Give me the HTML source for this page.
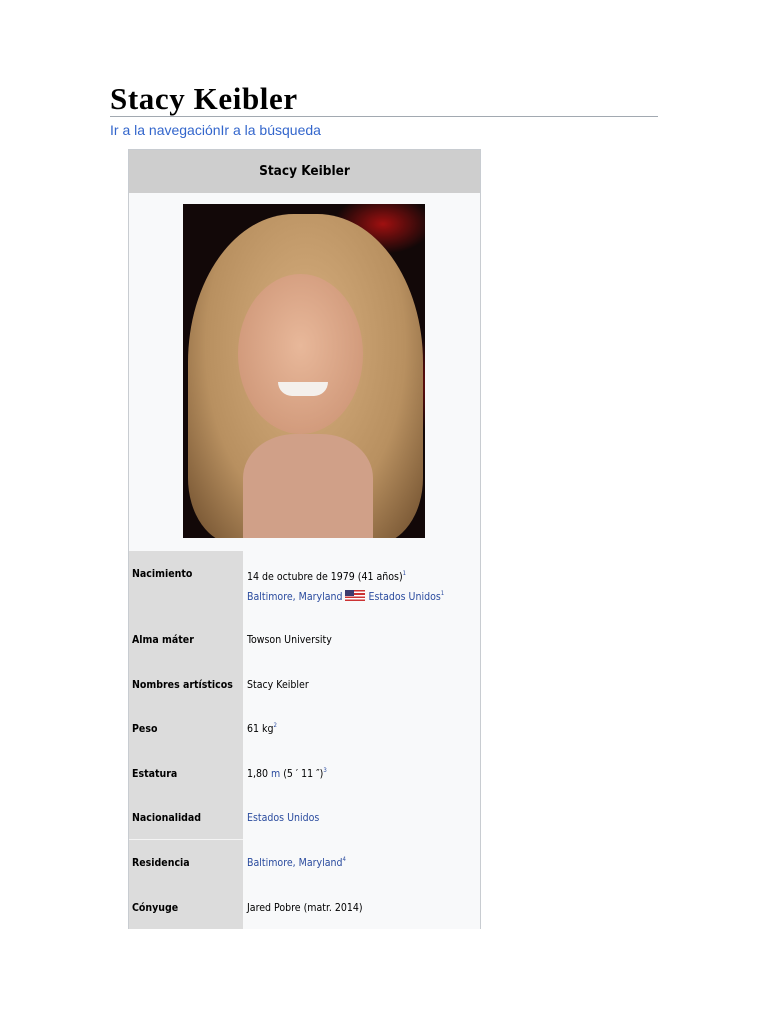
<!DOCTYPE html>
<html><head><meta charset="utf-8"><style>
body{margin:0;background:#fff;width:768px;height:1024px;position:relative;font-family:"Liberation Sans",sans-serif;overflow:hidden}
h1{position:absolute;left:110px;top:81px;margin:0;font:bold 31px "Liberation Serif",serif;letter-spacing:0.6px;color:#000}
.hr{position:absolute;left:110px;top:116px;width:548px;height:1px;background:#a2a9b1}
.nav{position:absolute;left:110px;top:122px;font-size:14px;color:#3366cc}
.box{position:absolute;left:128px;top:149px;width:351px;height:779px;background:#f8f9fa;border:1px solid #c8ccd1;border-bottom:none}
.hd{height:43px;background:#cecece;text-align:center;line-height:43px;font-weight:bold;font-size:13.5px;font-family:"DejaVu Sans Condensed","Liberation Sans",sans-serif}
.photo{position:absolute;left:54px;top:54px;width:242px;height:334px;overflow:hidden;background:#120808}
.row{position:absolute;left:0;width:351px;font-size:10.5px;line-height:14px;font-family:"DejaVu Sans Condensed","Liberation Sans",sans-serif}
.l{position:absolute;left:0;top:0;bottom:0;width:114px;background:#dcdcdc}
.l span{position:absolute;left:3px;font-weight:bold}
.v{position:absolute;left:118px;white-space:nowrap}
.a{color:#2a4b9e}
sup{font-size:6px;color:#2a4b9e;line-height:0;vertical-align:5px}
</style></head><body>
<h1>Stacy Keibler</h1><div class="hr"></div>
<div class="nav">Ir a la navegaciónIr a la búsqueda</div>
<div class="box">
<div class="hd">Stacy Keibler</div>
<div class="photo">
<div style="position:absolute;left:150px;top:-10px;width:100px;height:60px;background:radial-gradient(#a01010,transparent 70%)"></div>
<div style="position:absolute;left:200px;top:130px;width:60px;height:100px;background:radial-gradient(#801010,transparent 70%)"></div>
<div style="position:absolute;left:5px;top:10px;width:235px;height:330px;border-radius:45% 45% 20% 20%;background:radial-gradient(ellipse at 50% 40%,#d8b080,#b89060 60%,#6a4a2a 100%)"></div>
<div style="position:absolute;left:55px;top:70px;width:125px;height:160px;border-radius:50%;background:radial-gradient(ellipse at 50% 45%,#e8b89a,#c98f70)"></div>
<div style="position:absolute;left:60px;top:230px;width:130px;height:110px;background:#d0a088;border-radius:40% 40% 0 0"></div>
<div style="position:absolute;left:95px;top:178px;width:50px;height:14px;border-radius:0 0 25px 25px;background:#f4f0ec"></div>
</div>
<div class="row" style="top:401px;height:66px"><div class="l"><span style="top:16px">Nacimiento</span></div><div class="v" style="top:16px;line-height:20px">14 de octubre de 1979 (41 años)<sup>1</sup><br><span class="a">Baltimore, Maryland <span style="display:inline-block;width:20px;height:11px;vertical-align:-1px;background:repeating-linear-gradient(#c33 0 1.6px,#fff 1.6px 3.2px);position:relative"><span style="position:absolute;left:0;top:0;width:9px;height:6px;background:#3c3b6e"></span></span> Estados Unidos</span><sup>1</sup></div></div>
<div class="row" style="top:467px;height:45px"><div class="l"><span style="top:16px">Alma máter</span></div><div class="v" style="top:16px">Towson University</div></div>
<div class="row" style="top:512px;height:44px"><div class="l"><span style="top:16px">Nombres artísticos</span></div><div class="v" style="top:16px">Stacy Keibler</div></div>
<div class="row" style="top:556px;height:45px"><div class="l"><span style="top:16px">Peso</span></div><div class="v" style="top:16px">61 kg<sup>2</sup></div></div>
<div class="row" style="top:601px;height:44px"><div class="l"><span style="top:16px">Estatura</span></div><div class="v" style="top:16px">1,80 <span class="a">m</span> (5 ′ 11 ″)<sup>3</sup></div></div>
<div class="row" style="top:645px;height:45px"><div class="l" style="border-bottom:1px solid #f4f4f4"><span style="top:16px">Nacionalidad</span></div><div class="v a" style="top:16px">Estados Unidos</div></div>
<div class="row" style="top:690px;height:45px"><div class="l"><span style="top:16px">Residencia</span></div><div class="v" style="top:16px"><span class="a">Baltimore, Maryland</span><sup>4</sup></div></div>
<div class="row" style="top:735px;height:44px"><div class="l"><span style="top:16px">Cónyuge</span></div><div class="v" style="top:16px">Jared Pobre (matr. 2014)</div></div>
</div>
</body></html>
